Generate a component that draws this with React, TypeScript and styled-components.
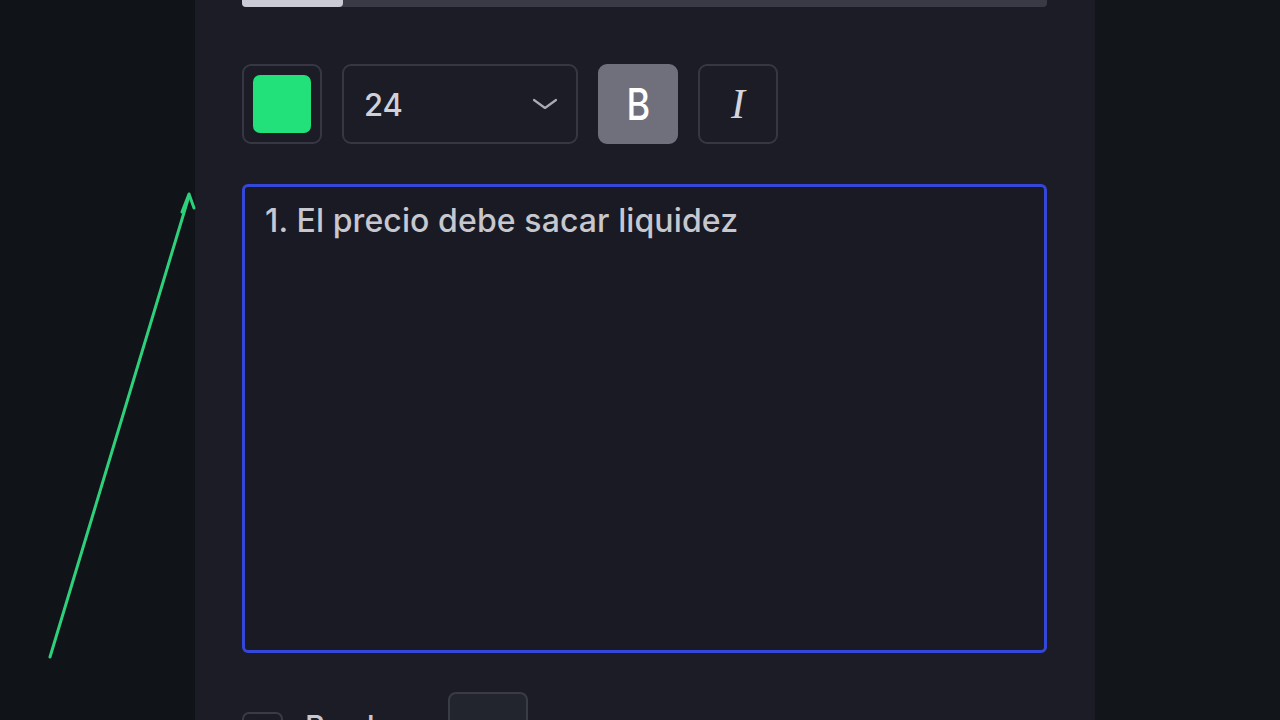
import React from "react";
import styled, { createGlobalStyle } from "styled-components";

const Global = createGlobalStyle`
  html, body { margin: 0; padding: 0; background: #111418; overflow: hidden; }
  body { font-family: Inter, "Noto Sans", sans-serif; }
`;

const Stage = styled.div`
  position: relative;
  width: 1280px;
  height: 720px;
  display: flex;
  background: linear-gradient(90deg, #101317 0%, #121519 100%);
  overflow: hidden;
`;

const Arrow = styled.svg`
  position: absolute;
  left: 0;
  top: 0;
  pointer-events: none;
`;

const Panel = styled.div`
  margin-left: 195px;
  width: 900px;
  height: 720px;
  flex-shrink: 0;
  background: #1b1c26;
  box-sizing: border-box;
  padding: 0 48px 0 47px;
  display: flex;
  flex-direction: column;
  overflow: hidden;
  & > * { flex-shrink: 0; }
`;

const Track = styled.div`
  height: 7px;
  background: #393a46;
  border-radius: 0 0 4px 4px;
  display: flex;
`;

const Thumb = styled.div`
  width: 101px;
  background: #c9cad6;
  border-radius: 0 0 4px 4px;
`;

const Toolbar = styled.div`
  margin-top: 57px;
  display: flex;
  gap: 20px;
  height: 80px;
`;

const ToolButton = styled.div<{ $active?: boolean }>`
  width: 80px;
  height: 80px;
  box-sizing: border-box;
  border-radius: 9px;
  border: 2px solid ${(p) => (p.$active ? "#6f707b" : "#363743")};
  background: ${(p) => (p.$active ? "#6f707b" : "transparent")};
  display: flex;
  align-items: center;
  justify-content: center;
  color: ${(p) => (p.$active ? "#ffffff" : "#d4d5dc")};
`;

const Swatch = styled.div<{ $color: string }>`
  width: 58px;
  height: 58px;
  border-radius: 7px;
  background: ${(p) => p.$color};
`;

const Select = styled.div`
  width: 236px;
  height: 80px;
  box-sizing: border-box;
  border-radius: 9px;
  border: 2px solid #363743;
  display: flex;
  align-items: center;
  justify-content: space-between;
  padding: 0 18px 0 20px;
  color: #d0d1d8;
  font-size: 31px;
  font-weight: 500;
`;

const BoldGlyph = styled.span`
  font-family: Inter, sans-serif;
  font-size: 44px;
  font-weight: 500;
  line-height: 1;
  transform: scaleX(0.82);
`;

const ItalicGlyph = styled.span`
  font-family: "Liberation Serif", serif;
  font-style: italic;
  font-size: 42px;
  line-height: 1;
`;

const TextArea = styled.div`
  margin-top: 40px;
  height: 469px;
  box-sizing: border-box;
  border: 3px solid #3447d8;
  border-radius: 6px;
  background: #191a23;
  padding: 12px 20px;
  color: #c6c7cf;
  font-size: 32px;
  font-weight: 500;
  line-height: 44px;
  letter-spacing: 0.1px;
`;

const BottomRow = styled.div`
  margin-top: 39px;
  display: flex;
  align-items: flex-start;
  gap: 22px;
`;

const Check = styled.div`
  margin-top: 20px;
  width: 41px;
  height: 40px;
  box-sizing: border-box;
  border: 2px solid #3a3b47;
  border-radius: 7px;
`;

const Label = styled.div`
  margin-top: 16px;
  color: #c6c7cf;
  font-size: 31px;
  font-weight: 500;
  width: 121px;
`;

const SmallButton = styled.div`
  width: 80px;
  height: 60px;
  box-sizing: border-box;
  border: 2px solid #3a3b47;
  border-radius: 8px;
  background: #22242e;
`;

export default function App() {
  return (
    <>
      <Global />
      <Stage>
        <Panel>
          <Track>
            <Thumb />
          </Track>
          <Toolbar>
            <ToolButton>
              <Swatch $color="#22e17b" />
            </ToolButton>
            <Select>
              <span>24</span>
              <svg width="26" height="14" viewBox="0 0 26 14">
                <path d="M2 3 L13 11 L24 3" fill="none" stroke="#a9aab4" strokeWidth="2.2" strokeLinecap="round" strokeLinejoin="round" />
              </svg>
            </Select>
            <ToolButton $active>
              <BoldGlyph>B</BoldGlyph>
            </ToolButton>
            <ToolButton>
              <ItalicGlyph>I</ItalicGlyph>
            </ToolButton>
          </Toolbar>
          <TextArea>1. El precio debe sacar liquidez</TextArea>
          <BottomRow>
            <Check />
            <Label>Borde</Label>
            <SmallButton />
          </BottomRow>
        </Panel>
        <Arrow width="220" height="720" viewBox="0 0 220 720">
          <path d="M50 657 L189 196" stroke="#2fd07c" strokeWidth="3" fill="none" strokeLinecap="round" />
          <path d="M182 212 L189 194 L194 208" stroke="#2fd07c" strokeWidth="3" fill="none" strokeLinecap="round" strokeLinejoin="round" />
        </Arrow>
      </Stage>
    </>
  );
}
